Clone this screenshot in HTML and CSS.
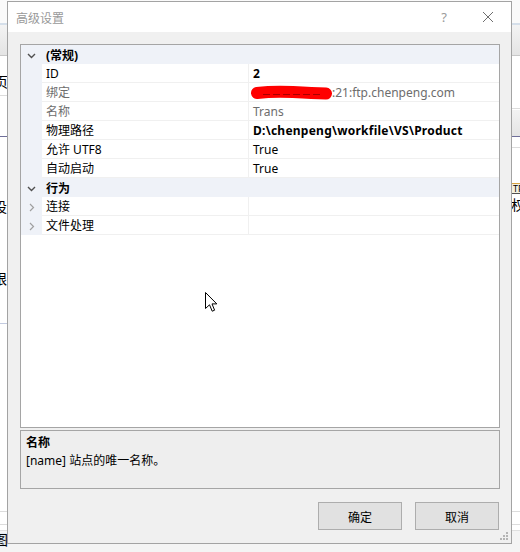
FILE: index.html
```html
<!DOCTYPE html>
<html lang="zh-CN">
<head>
<meta charset="utf-8">
<title>高级设置</title>
<link rel="stylesheet" href="styles.css">
</head>
<body>
<div class="screen">
  <div class="app">
    <div class="app-top"></div>
    <div class="app-bar"></div>
    <div class="app-line left-line l95"></div>
    <div class="app-line right-line l108"></div>
    <div class="app-bar2"></div>
    <div class="app-line dark l136"></div>
    <div class="app-line right-line l147"></div>
    <div class="app-line left-line blue l323"></div>
    <div class="app-line l511"></div>
    <div class="app-line l524"></div>
    <div class="app-bottom"></div>
    <span class="glyph g-ye">页</span>
    <span class="glyph g-she">设</span>
    <span class="glyph g-xian">限</span>
    <span class="glyph g-tu">图</span>
    <span class="tp-icon">TP</span>
    <span class="glyph g-quan">权</span>
  </div>

  <div class="dialog">
    <div class="titlebar">
      <span class="title">高级设置</span>
      <span class="help">?</span>
      <svg class="close" width="12" height="12" viewBox="0 0 12 12"><path d="M1 1 L11 11 M11 1 L1 11" stroke="#6f6f6f" stroke-width="1" fill="none"/></svg>
    </div>
    <div class="body">
      <div class="grid">
        <div class="row cat">
          <span class="margin"><svg width="9" height="6" viewBox="0 0 9 6"><path d="M1 1 L4.5 4.5 L8 1" stroke="#505050" stroke-width="1.4" fill="none"/></svg></span>
          <span class="cname">(常规)</span>
        </div>
        <div class="row"><span class="margin"></span><span class="name">ID</span><span class="value bold">2</span></div>
        <div class="row"><span class="margin"></span><span class="name ro">绑定</span><span class="value ro"><svg class="scribble" width="81" height="16" viewBox="0 0 81 16"><path d="M6 8 Q22 6 42 7 T75 8.5" stroke="#ff0000" stroke-width="12" stroke-linecap="round" fill="none"/><path d="M12 9.5 L72 9.5" stroke="#a80000" stroke-width="1" stroke-dasharray="7 3" fill="none"/></svg>:21:ftp.chenpeng.com</span></div>
        <div class="row"><span class="margin"></span><span class="name ro">名称</span><span class="value ro">Trans</span></div>
        <div class="row"><span class="margin"></span><span class="name">物理路径</span><span class="value bold wide">D:\chenpeng\workfile\VS\Product</span></div>
        <div class="row"><span class="margin"></span><span class="name">允许 UTF8</span><span class="value">True</span></div>
        <div class="row"><span class="margin"></span><span class="name">自动启动</span><span class="value">True</span></div>
        <div class="row cat">
          <span class="margin"><svg width="9" height="6" viewBox="0 0 9 6"><path d="M1 1 L4.5 4.5 L8 1" stroke="#505050" stroke-width="1.4" fill="none"/></svg></span>
          <span class="cname">行为</span>
        </div>
        <div class="row"><span class="margin"><svg width="6" height="9" viewBox="0 0 6 9"><path d="M1 1 L4.5 4.5 L1 8" stroke="#a0a0a0" stroke-width="1.2" fill="none"/></svg></span><span class="name">连接</span><span class="value"></span></div>
        <div class="row"><span class="margin"><svg width="6" height="9" viewBox="0 0 6 9"><path d="M1 1 L4.5 4.5 L1 8" stroke="#a0a0a0" stroke-width="1.2" fill="none"/></svg></span><span class="name">文件处理</span><span class="value"></span></div>
      </div>
      <div class="desc">
        <div class="desc-title">名称</div>
        <div class="desc-text">[name] 站点的唯一名称。</div>
      </div>
      <div class="buttons">
        <button class="btn">确定</button>
        <button class="btn">取消</button>
      </div>
    </div>
    <svg class="grip" width="9" height="9" viewBox="0 0 9 9">
      <rect x="6" y="0" width="2" height="2" fill="#b4b4b4"/>
      <rect x="3" y="3" width="2" height="2" fill="#b4b4b4"/>
      <rect x="6" y="3" width="2" height="2" fill="#b4b4b4"/>
      <rect x="0" y="6" width="2" height="2" fill="#b4b4b4"/>
      <rect x="3" y="6" width="2" height="2" fill="#b4b4b4"/>
      <rect x="6" y="6" width="2" height="2" fill="#b4b4b4"/>
    </svg>
  </div>

  <svg class="cursor" width="13" height="21" viewBox="0 0 13 21">
    <path d="M0.5 0.5 L0.5 16.5 L4.5 12.8 L7.2 19.2 L9.6 18.2 L7 11.9 L11.8 11.9 Z" fill="#ffffff" stroke="#000000" stroke-width="1" stroke-linejoin="miter"/>
  </svg>
</div>
</body>
</html>
```

FILE: styles.css
```css
* { box-sizing: border-box; }

html, body {
  margin: 0;
  padding: 0;
  width: 520px;
  height: 552px;
  overflow: hidden;
  background: #ffffff;
  font-family: "Noto Sans", "Noto Sans CJK SC", sans-serif;
  font-size: 12px;
  color: #000;
}

.screen {
  position: relative;
  width: 520px;
  height: 552px;
  overflow: hidden;
}

/* background application window (desktop) */
.app {
  position: absolute;
  inset: 0;
  background: #ffffff;
}
.app-top {
  position: absolute;
  left: 0; right: 0; top: 0;
  height: 23px;
  background: #fafafa;
}
.app-bar {
  position: absolute;
  left: 0; right: 0; top: 23px;
  height: 33px;
  border-top: 2px solid #d5dfea;
  border-bottom: 1px solid #c8c8c8;
  background: linear-gradient(#f3f3f3, #e4e4e4);
}
.app-line {
  position: absolute;
  left: 0; right: 0;
  height: 1px;
  background: #dcdcdc;
}
.left-line { right: 260px; }
.right-line { left: 260px; }
.app-line.dark { background: #6f6f9a; }
.app-line.blue { background: #c3cbe0; }
.l95 { top: 95px; }
.l108 { top: 108px; }
.l136 { top: 136px; }
.l147 { top: 147px; }
.l323 { top: 323px; }
.l511 { top: 511px; }
.l524 { top: 524px; }
.app-bar2 {
  position: absolute;
  left: 260px; right: 0; top: 110px;
  height: 26px;
  background: linear-gradient(#f3f3f3, #e4e4e4);
}
.app-bottom {
  position: absolute;
  left: 0; right: 0; top: 530px; bottom: 0;
  background: #f4f4f4;
  border-top: 1px solid #e0e0e0;
}
.glyph {
  position: absolute;
  font-size: 14px;
  line-height: 14px;
  color: #000;
}
.g-ye { left: -6px; top: 75px; }
.g-she { left: -7px; top: 200px; }
.g-xian { left: -7px; top: 272px; }
.g-tu { left: -6px; top: 533px; background: #e4ecf6; }
.g-quan { left: 511px; top: 198px; }
.tp-icon {
  position: absolute;
  left: 511px; top: 183px;
  width: 12px; height: 11px;
  font-size: 9px;
  line-height: 10px;
  border: 1px solid #505050;
  border-top-color: #d9a441;
  background: #f4f0e0;
  padding-left: 1px;
}

/* dialog window */
.dialog {
  position: absolute;
  left: 7px;
  top: 1px;
  width: 505px;
  height: 543px;
  border: 1px solid #a3a3a3;
  background: #f0f0f0;
  display: flex;
  flex-direction: column;
}
.titlebar {
  height: 30px;
  background: #ffffff;
  display: flex;
  align-items: center;
  padding-left: 8px;
  flex-shrink: 0;
}
.title {
  color: #999999;
  font-size: 12px;
  flex: 1;
  margin-top: 1px;
}
.help {
  color: #9a9a9a;
  font-size: 13px;
  margin-right: 35px;
}
.close {
  margin-right: 17px;
}

.body {
  flex: 1;
  padding: 12px 11px 0 12px;
  display: flex;
  flex-direction: column;
}

.grid {
  height: 384px;
  border: 1px solid #a5a5a5;
  background: #ffffff;
  flex-shrink: 0;
}
.row {
  display: flex;
  height: 19px;
  align-items: stretch;
}
.row .margin {
  width: 21px;
  flex-shrink: 0;
  background: #eff2f8;
  display: flex;
  align-items: center;
  justify-content: center;
  padding-top: 1px;
}
.row .name {
  width: 207px;
  flex-shrink: 0;
  padding-left: 4px;
  padding-top: 2px;
  line-height: 16px;
  border-bottom: 1px solid #f0f0f0;
  border-right: 1px solid #f0f0f0;
  white-space: nowrap;
}
.row .value {
  flex: 1;
  padding-left: 4px;
  padding-top: 2px;
  line-height: 16px;
  border-bottom: 1px solid #f0f0f0;
  white-space: nowrap;
  overflow: visible;
  display: flex;
  align-items: center;
}
.row.cat {
  background: #eff2f8;
}
.row.cat .margin { padding-top: 2px; }
.cname {
  padding-left: 4px;
  padding-top: 2px;
  font-weight: bold;
  line-height: 17px;
}
.bold { font-weight: bold; }
.wide { letter-spacing: 0.25px; }
.ro { color: #6d6d6d; }
.scribble {
  display: block;
  flex-shrink: 0;
  margin-left: -2px;
  margin-top: -1px;
}

.desc {
  margin-top: 2px;
  height: 59px;
  border: 1px solid #a5a5a5;
  background: #eeeeee;
  padding: 3px 5px 2px;
  flex-shrink: 0;
}
.desc-title {
  font-weight: bold;
  line-height: 18px;
}
.desc-text {
  line-height: 18px;
}

.buttons {
  margin-top: 13px;
  display: flex;
  justify-content: flex-end;
  gap: 13px;
  padding-right: 1px;
}
.btn {
  width: 84px;
  height: 28px;
  border: 1px solid #adadad;
  background: #e1e1e1;
  font-family: "Noto Sans CJK SC", "Noto Sans", sans-serif;
  font-size: 12px;
  color: #000;
  padding: 0;
}

.grip {
  position: absolute;
  right: 2px;
  bottom: 2px;
}

.cursor {
  position: absolute;
  left: 205px;
  top: 292px;
}
```
